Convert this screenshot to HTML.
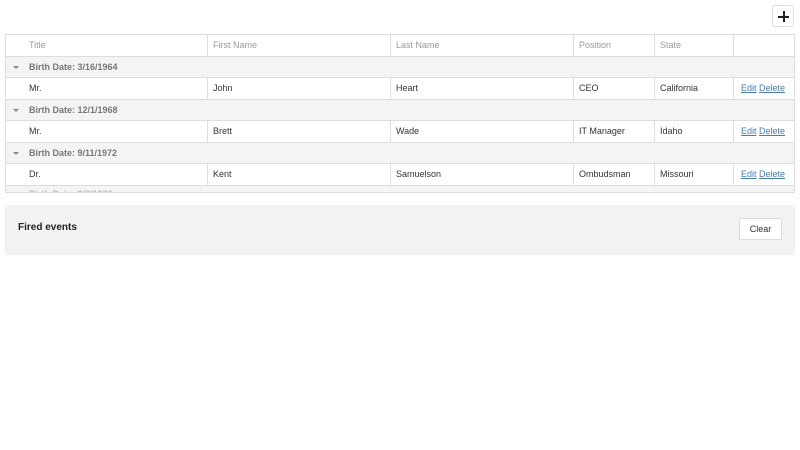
<!DOCTYPE html>
<html><head><style>
body{margin:0;width:800px;height:450px;background:#fff;font-family:"Liberation Sans",sans-serif;font-size:9px;color:#333;position:relative;overflow:hidden}
.abs{position:absolute}
.grid{left:5px;top:34px;width:788px;height:157px;border:1px solid #ddd;overflow:hidden}
.row{position:absolute;left:0;width:788px;height:21px;border-bottom:1px solid #ddd;box-sizing:border-box}
.hdr{color:#999;background:#fff}
.grp{background:#f4f4f4;color:#777;font-weight:bold}
.c{position:absolute;top:0;height:21px;line-height:21px;padding-left:5px;box-sizing:border-box}
.b{border-left:1px solid #ddd}
a{color:#4a7bab;text-decoration:underline}
.tri{position:absolute;left:7px;top:9px;width:0;height:0;border-left:3px solid transparent;border-right:3px solid transparent;border-top:3px solid #888}
</style></head><body>
<div class="abs" style="left:772px;top:5px;width:22px;height:22px;border:1px solid #ddd;border-radius:3px;box-sizing:border-box;background:#fff">
<div class="abs" style="left:5px;top:10px;width:11px;height:1.5px;background:#222"></div>
<div class="abs" style="left:10px;top:5px;width:1.5px;height:11px;background:#222"></div>
</div>
<div class="abs grid">
<div class="row hdr" style="top:0;height:22px">
<div class="c" style="left:18px">Title</div>
<div class="c b" style="left:201px">First Name</div>
<div class="c b" style="left:384px">Last Name</div>
<div class="c b" style="left:567px">Position</div>
<div class="c b" style="left:648px">State</div>
<div class="c b" style="left:727px;height:22px"></div>
</div>
<div class="row grp" style="top:22px"><div class="tri"></div><div class="c" style="left:18px">Birth Date: 3/16/1964</div></div>
<div class="row" style="top:43px;height:22px">
<div class="c" style="left:18px">Mr.</div><div class="c b" style="left:201px;height:21px">John</div><div class="c b" style="left:384px;height:21px">Heart</div><div class="c b" style="left:567px;height:21px">CEO</div><div class="c b" style="left:648px;height:21px">California</div><div class="c b" style="left:727px;height:21px;padding-left:7px"><a>Edit</a> <a>Delete</a></div></div>
<div class="row grp" style="top:65px"><div class="tri"></div><div class="c" style="left:18px">Birth Date: 12/1/1968</div></div>
<div class="row" style="top:86px;height:22px">
<div class="c" style="left:18px">Mr.</div><div class="c b" style="left:201px;height:21px">Brett</div><div class="c b" style="left:384px;height:21px">Wade</div><div class="c b" style="left:567px;height:21px">IT Manager</div><div class="c b" style="left:648px;height:21px">Idaho</div><div class="c b" style="left:727px;height:21px;padding-left:7px"><a>Edit</a> <a>Delete</a></div></div>
<div class="row grp" style="top:108px"><div class="tri"></div><div class="c" style="left:18px">Birth Date: 9/11/1972</div></div>
<div class="row" style="top:129px;height:22px">
<div class="c" style="left:18px">Dr.</div><div class="c b" style="left:201px;height:21px">Kent</div><div class="c b" style="left:384px;height:21px">Samuelson</div><div class="c b" style="left:567px;height:21px">Ombudsman</div><div class="c b" style="left:648px;height:21px">Missouri</div><div class="c b" style="left:727px;height:21px;padding-left:7px"><a>Edit</a> <a>Delete</a></div></div>
<div class="row grp" style="top:151px"><div class="c" style="left:18px;top:-2px;color:#bbb">Birth Date: 3/7/1976</div></div>
</div>
<div class="abs" style="left:5px;top:205px;width:790px;height:50px;background:#f2f2f2">
<div class="abs" style="left:13px;top:17px;font-size:10px;font-weight:bold;color:#222">Fired events</div>
<div class="abs" style="left:734px;top:13px;width:43px;height:22px;border:1px solid #ddd;background:#fff;box-sizing:border-box;text-align:center;line-height:20px;color:#333">Clear</div>
</div>
</body></html>
